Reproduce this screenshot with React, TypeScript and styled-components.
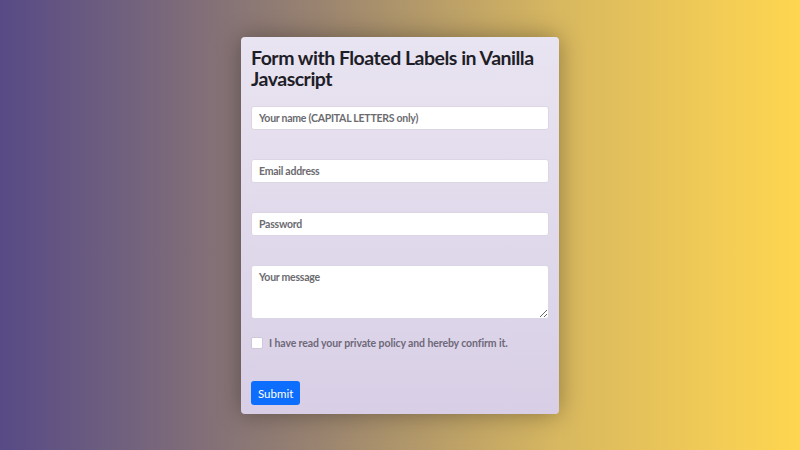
import styled, { createGlobalStyle } from "styled-components";

const GlobalStyle = createGlobalStyle`
  html, body {
    margin: 0;
    height: 100%;
  }
  body {
    font-family: Lato, "Noto Sans", sans-serif;
    background: linear-gradient(to right, #574a86 0%, #9a8470 40%, #d8b860 70%, #ffd650 100%);
  }
`;

const Page = styled.div`
  width: 800px;
  height: 450px;
  display: flex;
  justify-content: center;
  align-items: flex-start;
  padding-top: 37px;
  box-sizing: border-box;
`;

const Card = styled.form`
  width: 318px;
  box-sizing: border-box;
  padding: 10px 10px 9px;
  border-radius: 4px;
  background: linear-gradient(to bottom, #e9e4f1, #d8cfe6);
  box-shadow: 0 0 24px rgba(0, 0, 0, 0.35);
`;

const Title = styled.h1`
  margin: 0 0 17px;
  font-size: 19.5px;
  line-height: 21px;
  font-weight: 700;
  letter-spacing: -0.5px;
  color: #1e1e28;
`;

const Field = styled.div`
  margin-bottom: 29px;
`;

const Input = styled.input`
  display: block;
  width: 100%;
  box-sizing: border-box;
  height: 24px;
  padding: 0 7px;
  border: 1px solid #dcd6e4;
  border-radius: 3px;
  background: #fff;
  font-family: inherit;
  font-size: 10.5px;
  font-weight: 700;
  letter-spacing: -0.25px;
  color: #333;

  &::placeholder {
    color: #6b6b70;
  }
`;

const TextArea = styled.textarea`
  display: block;
  width: 100%;
  box-sizing: border-box;
  height: 54px;
  padding: 5px 7px;
  border: 1px solid #dcd6e4;
  border-radius: 3px;
  background: #fff;
  font-family: inherit;
  font-size: 10.5px;
  font-weight: 700;
  letter-spacing: -0.25px;
  color: #333;
  resize: vertical;

  &::placeholder {
    color: #6b6b70;
  }
`;

const CheckRow = styled.label`
  display: flex;
  align-items: center;
  gap: 6px;
  margin: -11px 0 32px;
  font-size: 10.5px;
  font-weight: 700;
  letter-spacing: -0.1px;
  color: #6e6878;
`;

const Box = styled.span`
  width: 10px;
  height: 10px;
  background: #fff;
  border: 1px solid #cfc8da;
  border-radius: 2px;
`;

const Button = styled.button`
  height: 24px;
  padding: 0 7px;
  border: none;
  border-radius: 3px;
  background: #0d6efd;
  color: #fff;
  font-family: inherit;
  font-size: 11.5px;
`;

export default function App() {
  return (
    <>
      <GlobalStyle />
      <Page>
        <Card onSubmit={(e) => e.preventDefault()}>
          <Title>Form with Floated Labels in Vanilla Javascript</Title>
          <Field>
            <Input placeholder="Your name (CAPITAL LETTERS only)" />
          </Field>
          <Field>
            <Input placeholder="Email address" />
          </Field>
          <Field>
            <Input type="password" placeholder="Password" />
          </Field>
          <Field>
            <TextArea placeholder="Your message" />
          </Field>
          <CheckRow>
            <Box />I have read your private policy and hereby confirm it.
          </CheckRow>
          <Button type="submit">Submit</Button>
        </Card>
      </Page>
    </>
  );
}
